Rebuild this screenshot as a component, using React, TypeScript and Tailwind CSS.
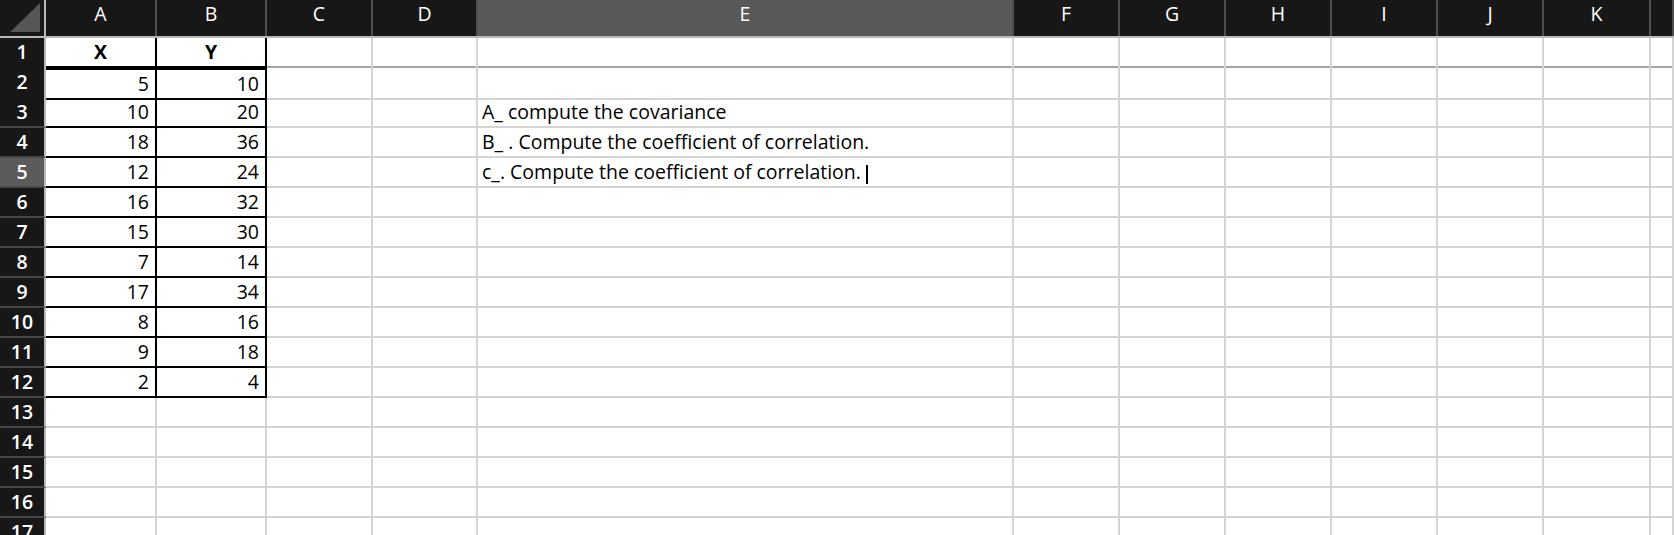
import React from 'react';

const COLUMNS = ['A', 'B', 'C', 'D', 'E', 'F', 'G', 'H', 'I', 'J', 'K', ''];

const xValues = [5, 10, 18, 12, 16, 15, 7, 17, 8, 9, 2];
const yValues = [10, 20, 36, 24, 32, 30, 14, 34, 16, 18, 4];

const notes: Record<number, string> = {
  3: 'A_ compute the covariance',
  4: 'B_ . Compute the coefficient of correlation.',
  5: 'c_. Compute the coefficient of correlation.',
};

const gridCols =
  'grid grid-cols-[46px_111px_110px_106px_105px_536px_106px_106px_106px_106px_106px_107px_1fr]';

const ColumnHeader: React.FC = () => (
  <div className="h-[38px] border-b-2 border-[#b9b9b9] bg-[#171717]">
    <div className={`${gridCols} h-full`}>
      <div className="relative border-r-2 border-[#b9b9b9]">
        <svg className="absolute left-0 top-0" width="44" height="36" viewBox="0 0 44 36">
          <polygon points="40,3 40,32 10,32" fill="#565656" />
        </svg>
      </div>
      {COLUMNS.map((col, i) => (
        <div
          key={i}
          className={`border-r-2 border-[#4f4f4f] text-center font-medium leading-[28px] text-white ${
            col === 'E' ? 'bg-[#595959]' : ''
          }`}
        >
          {col}
        </div>
      ))}
    </div>
  </div>
);

interface RowProps {
  index: number;
}

const DataRow: React.FC<RowProps> = ({ index }) => {
  const inTable = index >= 2 && index <= 12;
  const first = index === 1;
  const height = first ? 'h-[28px]' : 'h-[30px]';
  const x = inTable ? xValues[index - 2] : undefined;
  const y = inTable ? yValues[index - 2] : undefined;

  return (
    <div className={`${gridCols} ${height}`}>
      <div
        className={`border-r-2 border-[#b9b9b9] text-center font-semibold leading-[28px] text-white ${
          first ? '' : 'border-b-2 border-b-[#474747]'
        } ${index === 5 ? 'bg-[#5b5b5b]' : 'bg-[#171717]'}`}
      >
        {index}
      </div>
      {COLUMNS.map((col, i) => {
        const tableCell = (col === 'A' || col === 'B') && (first || inTable);
        let cls = 'border-r-2 whitespace-nowrap leading-[28px]';
        if (tableCell) {
          cls += ' border-black border-b-2';
          if (index === 2) cls += ' border-t-2 leading-[26px]';
        } else {
          cls += ' border-[#d4d4d4]';
          if (!first) cls += ' border-b-2';
        }

        let content: React.ReactNode = null;
        if (tableCell && first) {
          content = <div className="text-center font-bold">{col === 'A' ? 'X' : 'Y'}</div>;
        } else if (tableCell) {
          content = <div className="pr-[6px] text-right">{col === 'A' ? x : y}</div>;
        } else if (col === 'E' && notes[index]) {
          content = (
            <div className="pl-[4px]">
              {notes[index]}
              {index === 5 && (
                <span className="ml-[5px] inline-block h-[19px] w-[2px] bg-black align-[-5px]" />
              )}
            </div>
          );
        }

        return (
          <div key={i} className={cls}>
            {content}
          </div>
        );
      })}
    </div>
  );
};

export default function App() {
  const rows = Array.from({ length: 17 }, (_, i) => i + 1);

  return (
    <div className="h-[535px] w-[1674px] overflow-hidden bg-white font-['Open_Sans',sans-serif] text-[19.5px] text-black">
      <ColumnHeader />
      <DataRow index={1} />
      <div className="h-[2px] bg-[#a3a3a3]" />
      {rows.slice(1).map((r) => (
        <DataRow key={r} index={r} />
      ))}
    </div>
  );
}
